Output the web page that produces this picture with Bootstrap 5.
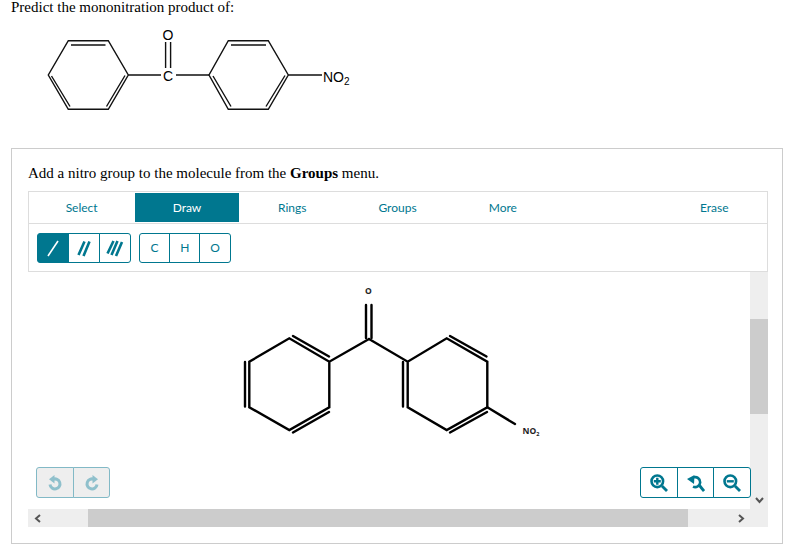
<!DOCTYPE html>
<html lang="en">
<head>
    <meta charset="UTF-8">
    <meta name="viewport" content="width=device-width, initial-scale=1.0">
    <title>Predict the mononitration product</title>
    <link href="https://cdn.jsdelivr.net/npm/bootstrap@5.3.0/dist/css/bootstrap.min.css" rel="stylesheet">
    <style>
        body { background: #fff; color: #000; font-family: "Liberation Serif", serif; font-size: 15px; }
        .question { margin: 0 0 0 11px; line-height: 15px; height: 14px; }
        .top-figure { display: block; width: 788px; height: 134px; }
        .top-figure text { font-family: "Liberation Sans", sans-serif; font-size: 14px; fill: #000; }
        .top-figure .sub { font-size: 10px; }
        .panel { margin-left: 11px; width: 772px; border: 1px solid #ccc; padding: 15px 14px 16px 16px; }
        .instruction { margin: 0 0 9px; line-height: 18px; }
        .toolbox { border: 1px solid #ddd; height: 81px; font-family: Lato, sans-serif; font-size: 12px; }
        .tabs { height: 32px; border-bottom: 1px solid #ddd; flex-wrap: nowrap; }
        .tabs .nav-link { flex: 0 0 105.3px; padding: 1px 0 0; margin: 1px 0; height: 29px; line-height: 28px; color: #00778f; border-radius: 0; text-align: center; border-left: 1px solid transparent; border-right: 1px solid transparent; background-clip: padding-box; }
        .tabs .nav-link.active { background-color: #00778f; color: #fff; }
        .tab-gap { flex: 1 1 0; }
        .tools { padding: 9px 8px; gap: 8px; }
        .tool-btn { width: 32px; height: 30px; padding: 0; display: flex; align-items: center; justify-content: center; border-color: #00778f; color: #00778f; background: #fff; font-size: 12px; --bs-btn-border-radius: 3px; }
        .atom-btn { width: 31.2px; }
        .tool-btn.on { background: #00778f; color: #fff; }
        .canvas-row { height: 237px; }
        .canvas { width: 722px; height: 237px; position: relative; }
        .canvas > svg { display: block; }
        .canvas text { font-family: "Open Sans", sans-serif; font-weight: 700; font-size: 8.5px; fill: #222; }
        .canvas .sub { font-size: 5.5px; }
        .vbar { width: 18px; background: #eee; position: relative; }
        .vthumb { height: 95px; margin-top: 47px; background: #ccc; }
        .hbar { height: 18px; background: #eee; padding-left: 60px; }
        .hthumb { width: 600px; height: 18px; background: #ccc; }
        .arrow { position: absolute; }
        .hbar-wrap { position: relative; }
        .float-group { position: absolute; top: 195px; }
        .undo-group { left: 8px; }
        .zoom-group { left: 612px; z-index: 2; }
        .icon-btn { height: 31px; width: 37.7px; padding: 0; display: flex; align-items: center; justify-content: center; border-color: #00778f; background: #fff; --bs-btn-border-radius: 3px; }
        .undo-group .icon-btn { background: #eee; border-color: #82b9c6; }
    </style>
</head>
<body>

<p class="question">Predict the mononitration product of:</p>

<!-- question structure, same coordinates as the page -->
<svg class="top-figure" viewBox="0 14 788 134">
    <g fill="none" stroke="#111" stroke-width="1.4">
        <path d="M68.3 40.7H108.3L128.3 75L108.3 109.3H68.3L48.3 75Z"/>
        <path d="M71 45H105.5M51.5 76L70 106.5M106.5 106.5L125 75.5"/>
        <path d="M228.3 40.7H268.3L288.3 75L268.3 109.3H228.3L209 75Z"/>
        <path d="M231 45H266M213 76L231 106.5M266 106.5L285 75.5"/>
        <path d="M128.3 75H161M176 75H209M288.3 75H322"/>
        <path d="M165.6 42V68M170.6 42V68"/>
    </g>
    <text x="168" y="81" text-anchor="middle">C</text>
    <text x="168" y="40" text-anchor="middle">O</text>
    <text x="323" y="82">NO<tspan class="sub" dy="3">2</tspan></text>
</svg>

<div class="panel">
    <p class="instruction">Add a nitro group to the molecule from the <b>Groups</b> menu.</p>

    <div class="toolbox">
        <nav class="nav tabs">
            <a class="nav-link" href="#">Select</a>
            <a class="nav-link active" href="#">Draw</a>
            <a class="nav-link" href="#">Rings</a>
            <a class="nav-link" href="#">Groups</a>
            <a class="nav-link" href="#">More</a>
            <span class="tab-gap"></span>
            <a class="nav-link" href="#">Erase</a>
        </nav>
        <div class="d-flex tools">
            <div class="btn-group">
                <button type="button" class="btn tool-btn on">
                    <svg width="14" height="17" viewBox="0 0 14 17"><path d="M2 16L12 1" stroke="#fff" stroke-width="1.6"/></svg>
                </button>
                <button type="button" class="btn tool-btn">
                    <svg width="14" height="17" viewBox="0 0 14 17"><path d="M1.5 15L7.5 1.5M6.5 16L12.5 1.5" stroke="#00778f" stroke-width="2.6"/></svg>
                </button>
                <button type="button" class="btn tool-btn">
                    <svg width="18" height="17" viewBox="0 0 18 17"><path d="M1.5 13.5L7.5 1M5.5 15L11.5 1M10 16L16 2" stroke="#00778f" stroke-width="2.6"/></svg>
                </button>
            </div>
            <div class="btn-group">
                <button type="button" class="btn tool-btn atom-btn">C</button>
                <button type="button" class="btn tool-btn atom-btn">H</button>
                <button type="button" class="btn tool-btn atom-btn">O</button>
            </div>
        </div>
    </div>

    <div class="d-flex canvas-row">
        <div class="canvas">
            <svg width="722" height="237" viewBox="28 272 722 237">
                <g fill="none" stroke="#000" stroke-width="2.4" stroke-linecap="round">
                    <path d="M369 339L329.3 361.7L289.3 338.3L249.3 361.7V407.3L289.3 430L329.3 407.3V361.7"/>
                    <path d="M293 336L329 356.5M245 362V406.5M293 432.5L329 412"/>
                    <path d="M369 339L407.7 361.7L446.7 338.3L487.3 361.7V407.3L446.7 430L407.7 407.3V361.7"/>
                    <path d="M403 362V406.5M450 336L486.5 356.5M450 432.5L487 412"/>
                    <path d="M487.3 407.3L515 424"/>
                    <path d="M366 305V338M371.5 305V338"/>
                </g>
                <text x="368.5" y="294" text-anchor="middle">O</text>
                <text x="522.5" y="434">NO<tspan class="sub" dy="2">2</tspan></text>
            </svg>
            <div class="btn-group float-group undo-group">
                <button type="button" class="btn icon-btn">
                    <svg width="16" height="16" viewBox="0 0 16 16" fill="none"><path d="M6 4.3A5 5 0 1 1 3 9.5" stroke="#8fc0cc" stroke-width="3"/><path d="M7.5 0V8.5L2 4.2Z" fill="#8fc0cc"/></svg>
                </button>
                <button type="button" class="btn icon-btn">
                    <svg width="16" height="16" viewBox="0 0 16 16" fill="none"><path d="M10 4.3A5 5 0 1 0 13 9.5" stroke="#8fc0cc" stroke-width="3"/><path d="M8.5 0V8.5L14 4.2Z" fill="#8fc0cc"/></svg>
                </button>
            </div>
            <div class="btn-group float-group zoom-group">
                <button type="button" class="btn icon-btn">
                    <svg width="18" height="18" viewBox="0 0 18 18" fill="none"><circle cx="7.3" cy="7.3" r="5.8" stroke="#00778f" stroke-width="2.6"/><path d="M3.8 7.3H10.8M7.3 3.8V10.8" stroke="#00778f" stroke-width="2.4"/><path d="M12 12L17 17" stroke="#00778f" stroke-width="2.8"/></svg>
                </button>
                <button type="button" class="btn icon-btn">
                    <svg width="18" height="18" viewBox="0 0 18 18" fill="none"><path d="M6.5 3.4A5 5 0 1 1 6 12.6" stroke="#00778f" stroke-width="2.6"/><path d="M0 5L7.5 1L7 10Z" fill="#00778f"/><path d="M12.5 11.5L17 17" stroke="#00778f" stroke-width="2.8"/></svg>
                </button>
                <button type="button" class="btn icon-btn">
                    <svg width="18" height="18" viewBox="0 0 18 18" fill="none"><circle cx="7.3" cy="7.3" r="5.8" stroke="#00778f" stroke-width="2.6"/><path d="M3.8 7.3H10.8" stroke="#00778f" stroke-width="2.4"/><path d="M12 12L17 17" stroke="#00778f" stroke-width="2.8"/></svg>
                </button>
            </div>
        </div>
        <div class="vbar">
            <div class="vthumb"></div>
            <svg class="arrow" style="left:5px;top:225px" width="9" height="7" viewBox="0 0 9 7"><path d="M1 1L4.5 5L8 1" fill="none" stroke="#555" stroke-width="2"/></svg>
        </div>
    </div>
    <div class="hbar-wrap">
        <div class="hbar"><div class="hthumb"></div></div>
        <svg class="arrow" style="left:6px;top:5px" width="7" height="9" viewBox="0 0 7 9"><path d="M6 1L2 4.5L6 8" fill="none" stroke="#555" stroke-width="2"/></svg>
        <svg class="arrow" style="left:710px;top:5px" width="7" height="9" viewBox="0 0 7 9"><path d="M1 1L5 4.5L1 8" fill="none" stroke="#555" stroke-width="2"/></svg>
    </div>
</div>

<script src="https://cdn.jsdelivr.net/npm/bootstrap@5.3.0/dist/js/bootstrap.bundle.min.js"></script>
</body>
</html>
